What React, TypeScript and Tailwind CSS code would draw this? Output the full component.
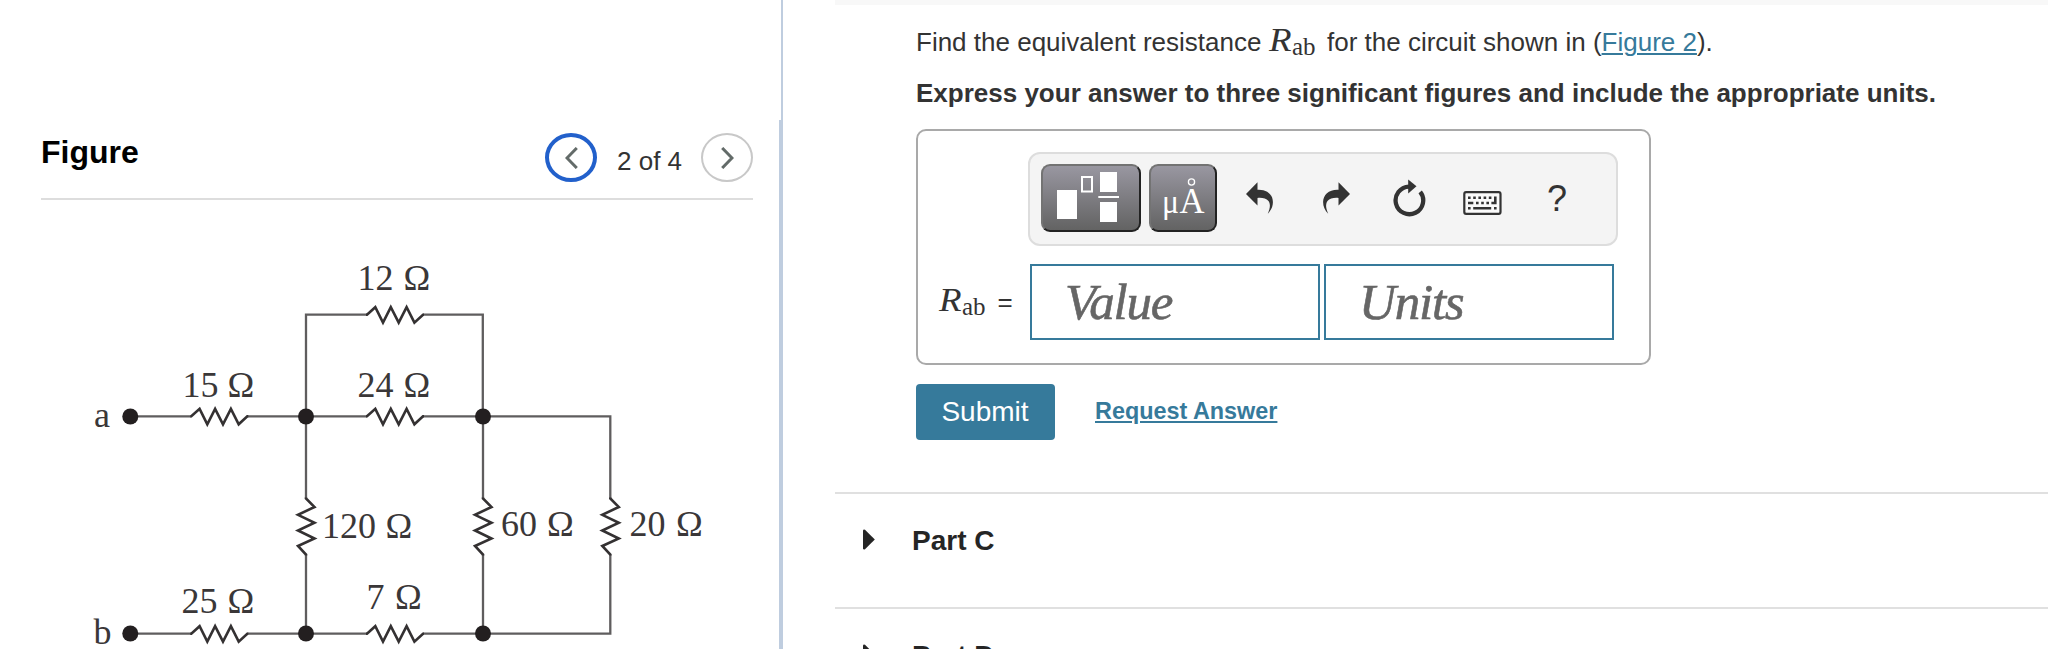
import React from "react";

const INK = "#231f20";
const WIRE = "#5f5d5e";

const labels = [
    { x: 357.5, y: 290.3, value: "12", omega: 403.5 },
    { x: 182.5, y: 396.5, value: "15", omega: 227.5 },
    { x: 357.5, y: 396.5, value: "24", omega: 403.5 },
    { x: 322, y: 537.5, value: "120", omega: 385.5 },
    { x: 501, y: 536, value: "60", omega: 547 },
    { x: 629.5, y: 536, value: "20", omega: 676 },
    { x: 181.5, y: 613, value: "25", omega: 227.5 },
    { x: 366.5, y: 609, value: "7", omega: 395 },
];

const nodes = [
    [130.3, 416.5],
    [306, 416.5],
    [483, 416.5],
    [130.3, 633.5],
    [306, 633.5],
    [483, 633.5],
];

const horizontalResistors = [
    [367, 314.7],
    [191.3, 416.3],
    [367, 416.3],
    [191.3, 633.7],
    [367, 633.7],
];

const verticalResistors = [
    [306, 498.5],
    [483, 498.5],
    [610.3, 498.5],
];

const Circuit = () => (
    <svg width="779" height="449" viewBox="0 200 779 449" className="block">
        <g fill="none" stroke={WIRE} strokeWidth="2.3">
            <path d="M306 416V314.7H367M423 314.7H482.8V416" />
            <path d="M130 416.3H191.3M247.3 416.3H367M423 416.3H610.3V498.5" />
            <path d="M306 416V498.5M306 554.5V633M483 416V498.5M483 554.5V633" />
            <path d="M130 633.7H191.3M247.3 633.7H367M423 633.7H610.3V554.5" />
        </g>
        <g fill="none" stroke="#343132" strokeWidth="2.6">
            {horizontalResistors.map(([x, y]) => (
                <path
                    key={`${x}-${y}`}
                    transform={`translate(${x} ${y})`}
                    d="M-1 0H0L8.3 -7.5L16 8L23.8 -7.5L31.7 8L39.6 -7.5L47.4 8L56 0H57"
                />
            ))}
            {verticalResistors.map(([x, y]) => (
                <path
                    key={`${x}-${y}`}
                    transform={`translate(${x} ${y})`}
                    d="M0 -1V0L8.5 8.5L-8 16.3L8.5 24.3L-8 32L8.5 40L-8 47.5L0 56V57"
                />
            ))}
        </g>
        <g fill={INK}>
            {nodes.map(([x, y]) => (
                <circle key={`${x}-${y}`} cx={x} cy={y} r="8" />
            ))}
        </g>
        <g fill="#3a3738" fontSize="36" fontFamily="'Liberation Serif', serif">
            <text x="94" y="427">a</text>
            <text x="93.5" y="643.5">b</text>
            {labels.map((item) => (
                <text key={item.value} x={item.x} y={item.y}>
                    {item.value}
                    <tspan x={item.omega}>Ω</tspan>
                </text>
            ))}
        </g>
    </svg>
);

const Rab = () => (
    <span className="inline-flex items-baseline font-['Liberation_Serif',serif] leading-none">
        <span className="inline-block w-[23px] origin-left scale-x-[1.12] text-[33px] italic">R</span>
        <span className="relative top-1 text-[25px]">ab</span>
    </span>
);

const UndoIcon = ({ className }: { className?: string }) => (
    <svg width="28" height="32" viewBox="0 0 28 32" fill="#333" className={className}>
        <path d="M0 12L11.5 0.3V7.7C21 7.2 26.8 12.5 26.9 20C27 24.5 25 28.5 21.8 31.7C24 26.5 24.8 22.5 22.5 19C20.2 16 16 15.6 11.5 15.9V23.5Z" />
    </svg>
);

const ResetIcon = () => (
    <svg width="34" height="38" viewBox="0 0 34 38">
        <path d="M17 7.6A13.8 13.8 0 1 0 28.2 12.8" fill="none" stroke="#333" strokeWidth="4.3" />
        <path d="M16.2 0.5L24.5 7.3L16.2 14.5Z" fill="#333" />
    </svg>
);

const KeyboardIcon = () => (
    <svg width="39" height="24" viewBox="0 0 39 24" fill="#333">
        <rect x="1.3" y="1.2" width="36.2" height="21.6" rx="1.8" fill="#fafafa" stroke="#333" strokeWidth="2.2" />
        <path d="M5 5.5h2.6v2.4H5zM10.2 5.5h2.6v2.4h-2.6zM15.4 5.5H18v2.4h-2.6zM20.6 5.5h2.6v2.4h-2.6zM25.8 5.5h2.6v2.4h-2.6z" />
        <path d="M5 10.8h5.3v2.4H5zM13 10.8h2.6v2.4H13zM18.2 10.8h2.6v2.4h-2.6zM23.4 10.8H26v2.4h-2.6zM28.4 10.8h2.6V5.5h2.6v7.7h-5.2z" />
        <path d="M5 16h2.6v2.4H5zM10.2 16h18v2.4h-18zM31 16h2.6v2.4H31z" />
    </svg>
);

const Toolbar = () => (
    <div className="ml-[110px] flex h-[94px] w-[590px] items-start rounded-[12px] border-2 border-[#dddddd] bg-[#f4f4f4] pt-[10px] pl-[11px]">
        <button className="flex h-[68px] w-[100px] items-start rounded-[9px] border-2 border-t-[#737373] border-r-[#222] border-b-[#222] border-l-[#737373] bg-linear-to-b from-[#9997a1] to-[#636363] pt-[6px] pl-[14px]">
            <svg width="62" height="50" viewBox="0 0 62 50" fill="#fff">
                <rect x="0" y="18" width="20" height="29" />
                <rect x="25" y="5" width="10" height="14.5" fill="none" stroke="#fff" strokeWidth="2" />
                <rect x="43" y="0" width="17" height="20" />
                <rect x="41.3" y="24" width="20.7" height="2" />
                <rect x="43" y="30" width="17" height="20" />
            </svg>
        </button>
        <button className="ml-2 flex h-[68px] w-[68px] justify-center rounded-[9px] border-2 border-t-[#737373] border-r-[#222] border-b-[#222] border-l-[#737373] bg-linear-to-b from-[#9997a1] to-[#636363] pt-[1px]">
            <svg width="44" height="62" viewBox="0 0 44 62" fill="#fff" fontFamily="'Liberation Serif', serif">
                <text x="1" y="46" fontSize="33" textLength="17" lengthAdjust="spacingAndGlyphs">μ</text>
                <text x="18.5" y="46" fontSize="35" textLength="25" lengthAdjust="spacingAndGlyphs">A</text>
                <circle cx="30.5" cy="15" r="3.1" fill="none" stroke="#fff" strokeWidth="1.3" />
            </svg>
        </button>
        <UndoIcon className="mt-[18px] ml-[29px]" />
        <UndoIcon className="mt-[18px] ml-[48px] -scale-x-100" />
        <div className="mt-[15px] ml-[42px]">
            <ResetIcon />
        </div>
        <div className="mt-[27px] ml-[37px]">
            <KeyboardIcon />
        </div>
        <span className="mt-[17px] ml-[45px] text-[36px] leading-[36px] text-[#333]">?</span>
    </div>
);

const AnswerField = ({ placeholder }: { placeholder: string }) => (
    <div className="flex h-[76px] w-[290px] items-center border-2 border-[#367a9b] pl-[33px] font-['Liberation_Serif',serif] text-[51px] leading-[60px] tracking-[-1.2px] text-[#666] italic [-webkit-text-stroke:0.6px_#666]">
        {placeholder}
    </div>
);

const PartRow = ({ title }: { title: string }) => (
    <div className="flex h-[115px] shrink-0 items-start border-t-2 border-[#e0e0e0] pt-[31px] pl-7">
        <svg width="12" height="21" viewBox="0 0 12 21" className="mt-1">
            <path d="M0 1.2Q0.6 -0.2 2 0.8L11.8 10.5L2 20.2Q0.6 21.2 0 19.8Z" fill="#252525" />
        </svg>
        <h2 className="ml-[37px] text-[28px] leading-8 font-bold text-[#252525]">{title}</h2>
    </div>
);

const FigurePanel = () => (
    <div className="flex w-[779px] shrink-0 flex-col">
        <div className="mr-[26px] ml-[41px] flex h-[200px] items-start border-b-2 border-[#dddddd]">
            <h2 className="mt-[134px] text-[32px] leading-9 font-bold text-black">Figure</h2>
            <div className="mt-[133px] ml-auto flex items-start">
                <button className="flex h-[49px] w-[52px] items-center justify-center rounded-[50%] border-4 border-[#2260cb]">
                    <svg width="13" height="22" viewBox="0 0 13 22" fill="none" stroke="#636b69" strokeWidth="3">
                        <path d="M11.8 1L2 11L11.8 21" />
                    </svg>
                </button>
                <span className="mt-[13px] ml-5 w-[84px] text-[26px] leading-[30px] text-[#333]">2 of 4</span>
                <button className="flex h-[49px] w-[52px] items-center justify-center rounded-[50%] border-2 border-[#c8c8c8]">
                    <svg width="13" height="22" viewBox="0 0 13 22" fill="none" stroke="#636b69" strokeWidth="3">
                        <path d="M1.2 1L11 11L1.2 21" />
                    </svg>
                </button>
            </div>
        </div>
        <Circuit />
    </div>
);

export default function App() {
    return (
        <div className="flex h-[649px] w-[2048px] overflow-hidden bg-white font-['Liberation_Sans',sans-serif]">
            <FigurePanel />
            <div className="flex w-1 shrink-0 flex-col items-end">
                <div className="h-[120px] w-[2px] bg-[#bfcddf]" />
                <div className="w-1 flex-1 bg-[#bfcddf]" />
            </div>
            <div className="ml-[52px] flex flex-1 flex-col">
                <div className="h-[5px] shrink-0 bg-[#f8f8f8]" />
                <div className="flex h-[487px] shrink-0 flex-col pl-[81px]">
                    <p className="mt-[19px] flex h-[30px] items-baseline text-[26px] leading-[30px] whitespace-pre text-[#333]">
                        <span className="w-[353px]">Find the equivalent resistance</span>
                        <span className="w-[58px]">
                            <Rab />
                        </span>
                        <span>
                            for the circuit shown in (<a className="text-[#367a9b] underline decoration-2 underline-offset-2">Figure 2</a>).
                        </span>
                    </p>
                    <p className="mt-[24px] text-[26px] leading-[30px] font-bold text-[#333]">
                        Express your answer to three significant figures and include the appropriate units.
                    </p>
                    <div className="mt-[21px] flex h-[236px] w-[735px] flex-col rounded-[10px] border-2 border-[#a9a9a9] pt-[21px]">
                        <Toolbar />
                        <div className="mt-[18px] flex items-start">
                            <div className="flex w-[112px] items-baseline pt-[20px] pl-[21px] text-[26px] leading-[32px] text-[#333]">
                                <Rab />
                                <span className="ml-3">=</span>
                            </div>
                            <div className="flex gap-1">
                                <AnswerField placeholder="Value" />
                                <AnswerField placeholder="Units" />
                            </div>
                        </div>
                    </div>
                    <div className="mt-[19px] flex items-start">
                        <button className="h-14 w-[139px] rounded-[4px] bg-[#367a9b] pr-px text-[28px] leading-[56px] text-white">Submit</button>
                        <a className="mt-[11px] ml-[40px] text-[23.4px] leading-[32px] font-bold text-[#367a9b] underline decoration-2 underline-offset-2">
                            Request Answer
                        </a>
                    </div>
                </div>
                <PartRow title="Part C" />
                <PartRow title="Part D" />
            </div>
        </div>
    );
}
